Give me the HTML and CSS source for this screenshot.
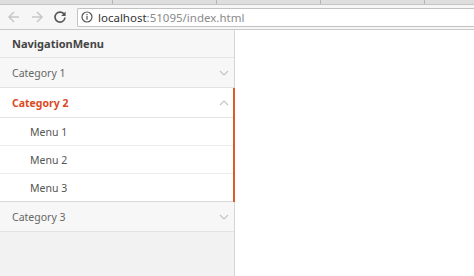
FILE: index.html
```html
<!DOCTYPE html>
<html>
<head>
<meta charset="utf-8">
<link rel="stylesheet" href="styles.css">
</head>
<body>
<div class="browser">
  <div class="tabstrip">
    <span class="tab"></span><span class="tab"></span><span class="tab"></span><span class="tab"></span>
  </div>
  <div class="toolbar">
    <svg class="nav-icon" width="14" height="14" viewBox="0 0 14 14"><path d="M12 7H2.5M7 2L2 7l5 5" fill="none" stroke="#c8c8c8" stroke-width="1.5"/></svg>
    <svg class="nav-icon" width="14" height="14" viewBox="0 0 14 14"><path d="M2 7h9.5M7 2l5 5-5 5" fill="none" stroke="#c8c8c8" stroke-width="1.5"/></svg>
    <svg class="nav-icon" width="14" height="14" viewBox="0 0 14 14"><path d="M11.3 4.5A5 5 0 1 0 12 7.5" fill="none" stroke="#555" stroke-width="1.6"/><path d="M12.6 1.6v4.4H8.2z" fill="#555"/></svg>
    <div class="omnibox">
      <svg class="info" width="12" height="12" viewBox="0 0 12 12"><circle cx="6" cy="6" r="5" fill="none" stroke="#555" stroke-width="1.2"/><rect x="5.4" y="5" width="1.2" height="3.8" fill="#555"/><rect x="5.4" y="3" width="1.2" height="1.2" fill="#555"/></svg>
      <span class="host">localhost</span><span class="path">:51095/index.html</span>
    </div>
  </div>
  <div class="page">
    <nav class="sidebar">
      <div class="nav-title">NavigationMenu</div>
      <div class="cat">
        <span>Category 1</span>
        <svg class="chev" width="10" height="6" viewBox="0 0 10 6"><path d="M1 1l4 4 4-4" fill="none" stroke="#c6c6c6" stroke-width="1.2"/></svg>
      </div>
      <div class="group open">
        <div class="cat active">
          <span>Category 2</span>
          <svg class="chev" width="10" height="6" viewBox="0 0 10 6"><path d="M1 5l4-4 4 4" fill="none" stroke="#c6c6c6" stroke-width="1.2"/></svg>
        </div>
        <div class="item">Menu 1</div>
        <div class="item">Menu 2</div>
        <div class="item">Menu 3</div>
      </div>
      <div class="cat">
        <span>Category 3</span>
        <svg class="chev" width="10" height="6" viewBox="0 0 10 6"><path d="M1 1l4 4 4-4" fill="none" stroke="#c6c6c6" stroke-width="1.2"/></svg>
      </div>
    </nav>
    <main class="content"></main>
  </div>
</div>
</body>
</html>
```
FILE: styles.css
```css
* { box-sizing: border-box; }
html, body { margin: 0; padding: 0; height: 100%; }
body {
  font-family: "Noto Sans", "Open Sans", sans-serif;
  background: #fff;
  overflow: hidden;
}
.browser { display: flex; flex-direction: column; height: 276px; width: 474px; overflow: hidden; }
.tabstrip {
  height: 5px;
  flex: none;
  background: #dedede;
  border-bottom: 1px solid #c4c4c4;
  display: flex;
  padding-left: 9px;
}
.tab {
  width: 104px;
  border-right: 1px solid #b4b4b4;
  flex: none;
}
.toolbar {
  height: 25px;
  flex: none;
  background: #f6f6f6;
  border-bottom: 1px solid #c9c9c9;
  display: flex;
  align-items: center;
  padding-left: 4px;
}
.nav-icon { margin: 0 3px; flex: none; }
.nav-icon + .nav-icon { margin-left: 6px; }
.omnibox {
  margin-left: 7px;
  height: 19px;
  flex: 1;
  background: #fff;
  border: 1px solid #c2c2c2;
  border-right: none;
  border-radius: 2px 0 0 2px;
  display: flex;
  align-items: center;
  padding-left: 3px;
  font-size: 11.5px;
}
.info { margin-right: 5px; }
.host { color: #333; }
.path { color: #8a8a8a; }
.page { flex: 1; display: flex; min-height: 0; }
.sidebar {
  width: 235px;
  flex: none;
  background: #f2f2f2;
  border-right: 1px solid #d6d6d6;
  display: flex;
  flex-direction: column;
}
.nav-title {
  height: 28px;
  flex: none;
  background: #f7f7f7;
  border-bottom: 1px solid #e4e4e4;
  display: flex;
  align-items: center;
  padding-left: 12px;
  font-size: 11px;
  font-weight: 700;
  color: #444;
}
.cat {
  height: 30px;
  flex: none;
  background: #f7f7f7;
  border-bottom: 1px solid #e2e2e2;
  display: flex;
  align-items: center;
  justify-content: space-between;
  padding: 0 5px 0 12px;
  font-size: 10.5px;
  color: #666;
}
.group.open {
  flex: none;
  margin-right: -1px;
  border-right: 2px solid #e2582c;
}
.cat.active {
  background: #fff;
  color: #dc4a1d;
  font-weight: 700;
  border-bottom: 1px solid #e4e4e4;
  padding-right: 4px;
}
.item {
  height: 28px;
  background: #fff;
  border-bottom: 1px solid #ececec;
  display: flex;
  align-items: center;
  padding-left: 30px;
  font-size: 10.5px;
  color: #555;
}
.item:last-child { border-bottom: 1px solid #d8d8d8; }
.content { flex: 1; background: #fff; }
```
